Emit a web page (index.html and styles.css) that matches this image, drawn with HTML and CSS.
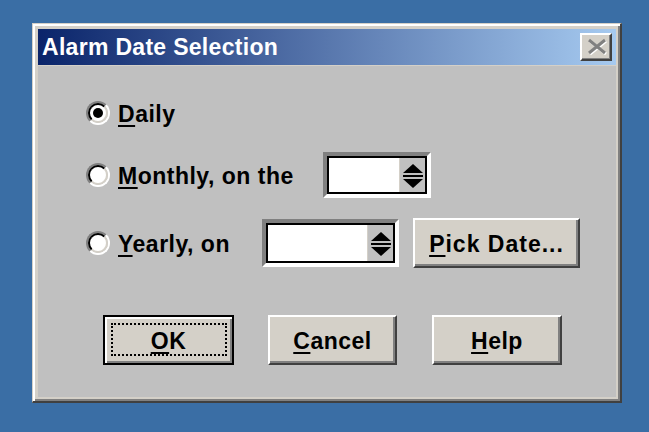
FILE: index.html
```html
<!DOCTYPE html>
<html>
<head>
<meta charset="utf-8">
<title>Alarm Date Selection</title>
<link rel="stylesheet" href="styles.css">
</head>
<body>
<div class="window">
  <div class="titlebar">
    <span class="title">Alarm Date Selection</span>
    <button class="close" aria-label="Close">
      <svg width="28" height="24" viewBox="0 0 28 24">
        <path d="M8 6 L24 19 M24 6 L8 19" stroke="#ffffff" stroke-width="3" fill="none"/>
        <path d="M7 5 L23 18 M23 5 L7 18" stroke="#808080" stroke-width="3" fill="none"/>
      </svg>
    </button>
  </div>
  <div class="content">
    <div class="row r1">
      <label class="opt"><span class="radio checked"><span class="radio-in"></span></span><span class="lbl"><u>D</u>aily</span></label>
    </div>
    <div class="row r2">
      <label class="opt opt-m"><span class="radio"><span class="radio-in"></span></span><span class="lbl"><u>M</u>onthly, on the</span></label>
      <div class="spin spin-m">
        <div class="spin-inner">
          <div class="field"></div>
          <div class="arrows">
            <svg width="24" height="32" viewBox="0 0 24 32"><polygon points="2,14 12,5 22,14" fill="#000"/><rect x="2" y="16" width="20" height="2" fill="#000"/><polygon points="2,20 22,20 12,29" fill="#000"/></svg>
          </div>
        </div>
      </div>
    </div>
    <div class="row r3">
      <label class="opt opt-y"><span class="radio"><span class="radio-in"></span></span><span class="lbl"><u>Y</u>early, on</span></label>
      <div class="spin spin-y">
        <div class="spin-inner">
          <div class="field"></div>
          <div class="arrows">
            <svg width="24" height="32" viewBox="0 0 24 32"><polygon points="2,14 12,5 22,14" fill="#000"/><rect x="2" y="16" width="20" height="2" fill="#000"/><polygon points="2,20 22,20 12,29" fill="#000"/></svg>
          </div>
        </div>
      </div>
      <button class="btn pick"><span><u>P</u>ick Date...</span></button>
    </div>
    <div class="buttons">
      <button class="btn default ok"><span><u>O</u>K</span></button>
      <button class="btn cancel"><span><u>C</u>ancel</span></button>
      <button class="btn help"><span><u>H</u>elp</span></button>
    </div>
  </div>
</div>
</body>
</html>
```
FILE: styles.css
```css
html, body {
  margin: 0;
  padding: 0;
}
body {
  background: #3a6ea5;
  width: 649px;
  height: 432px;
  overflow: hidden;
  font-family: "Liberation Sans", Arial, sans-serif;
}
.window {
  margin: 23px 0 0 32px;
  width: 590px;
  height: 380px;
  box-sizing: border-box;
  background: #d4d0c8;
  border-style: solid;
  border-width: 1px 2px 2px 1px;
  border-color: #d4d0c8 #404040 #404040 #d4d0c8;
  box-shadow: inset 2px 2px #ffffff, inset -2px -2px #808080;
  padding: 5px 4px 4px 5px;
  display: flex;
  flex-direction: column;
}
.titlebar {
  height: 36px;
  flex: none;
  background: linear-gradient(to right, #0a246a, #a6caf0);
  display: flex;
  align-items: center;
  justify-content: space-between;
  padding: 0 4px;
}
.title {
  color: #ffffff;
  font-weight: bold;
  font-size: 23px;
  letter-spacing: 0.3px;
  margin-top: 1px;
}
.close {
  width: 32px;
  height: 28px;
  box-sizing: border-box;
  padding: 0;
  margin: 0;
  border: 2px solid;
  border-color: #ffffff #404040 #404040 #ffffff;
  box-shadow: inset -1px -1px #808080;
  background: #d4d0c8;
  display: flex;
  align-items: center;
  justify-content: center;
}
.close svg { display: block; }
.content {
  flex: 1;
  background: #c0c0c0;
  margin-top: 1px;
  padding: 24px 0 0 48px;
  display: flex;
  flex-direction: column;
}
.row {
  display: flex;
  align-items: center;
}
.r1 { height: 46px; }
.r2 { height: 46px; margin-top: 16px; }
.r3 { height: 50px; margin-top: 20px; }
.opt {
  display: flex;
  align-items: center;
  gap: 8px;
  font-size: 23px;
  font-weight: bold;
  color: #000000;
  letter-spacing: 0.5px;
}
.opt .lbl { padding-top: 3px; }
.opt-m { width: 237px; }
.opt-y { width: 176px; }
u {
  text-decoration-thickness: 2px;
  text-underline-offset: 3px;
}
.radio {
  width: 24px;
  height: 24px;
  box-sizing: border-box;
  border-radius: 50%;
  border: 2px solid;
  border-color: #808080 #ffffff #ffffff #808080;
  display: flex;
  flex: none;
}
.radio-in {
  flex: 1;
  border-radius: 50%;
  border: 2px solid;
  border-color: #000000 #d4d0c8 #d4d0c8 #000000;
  background: #ffffff;
  display: flex;
  align-items: center;
  justify-content: center;
}
.radio.checked .radio-in::after {
  content: "";
  width: 10px;
  height: 10px;
  border-radius: 50%;
  background: #000000;
}
.spin {
  box-sizing: border-box;
  border: 4px solid;
  border-color: #808080 #ffffff #ffffff #808080;
  display: flex;
}
.spin-m { width: 108px; height: 46px; }
.spin-y { width: 137px; height: 48px; }
.spin-inner {
  flex: 1;
  display: flex;
  border: 2px solid #000000;
  background: #ffffff;
}
.field { flex: 1; }
.arrows {
  width: 26px;
  box-sizing: border-box;
  background: #c0c0c0;
  border-left: 1px solid #d4d0c8;
  display: flex;
  align-items: center;
  justify-content: center;
}
.arrows svg { display: block; }
.btn {
  position: relative;
  box-sizing: border-box;
  margin: 0;
  padding: 0;
  background: #d4d0c8;
  border: 2px solid;
  border-color: #ffffff #404040 #404040 #ffffff;
  box-shadow: inset -2px -2px #808080;
  font-family: "Liberation Sans", Arial, sans-serif;
  font-weight: bold;
  font-size: 23px;
  letter-spacing: 0.5px;
  color: #000000;
  display: flex;
  align-items: center;
  justify-content: center;
}
.btn span { padding-top: 2px; }
.pick {
  margin-left: 14px;
  width: 167px;
  height: 50px;
}
.pick span { letter-spacing: 1px; }
.buttons {
  display: flex;
  gap: 34px;
  margin-top: 47px;
  margin-left: 17px;
  height: 50px;
}
.buttons .btn { height: 50px; }
.ok { width: 131px; }
.cancel { width: 129px; }
.help { width: 130px; margin-left: 1px; }
.btn.default {
  border: 2px solid #000000;
  box-shadow: inset 2px 2px #ffffff, inset -2px -2px #808080;
}
.btn.default::before {
  content: "";
  position: absolute;
  left: 6px;
  top: 6px;
  right: 5px;
  bottom: 7px;
  border: 2px dotted #000000;
}
```
